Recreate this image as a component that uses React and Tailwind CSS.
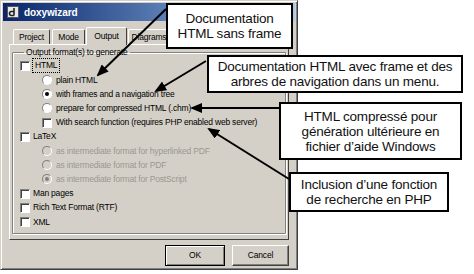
import React from "react";

function CheckBox({ disabled }) {
  return (
    <span
      className={`inline-block w-[10px] h-[10px] shrink-0 border border-t-[#808080] border-l-[#808080] border-r-white border-b-white shadow-[inset_1px_1px_0_#404040] ${
        disabled ? "bg-[#d4d0c8]" : "bg-white"
      }`}
    />
  );
}

function Radio({ checked, disabled }) {
  return (
    <span
      className={`relative inline-block w-[10px] h-[10px] shrink-0 rounded-full border border-t-[#808080] border-l-[#808080] border-r-white border-b-white ${
        disabled ? "bg-[#d4d0c8]" : "bg-white"
      }`}
    >
      {checked && (
        <span
          className={`absolute left-[2px] top-[2px] w-[4px] h-[4px] rounded-full ${
            disabled ? "bg-[#808080]" : "bg-black"
          }`}
        />
      )}
    </span>
  );
}

function Row({ indent, children }) {
  return (
    <div className={`flex items-center h-[14.2px] ${indent}`}>{children}</div>
  );
}

function Callout({ className, lines }) {
  return (
    <div
      className={`absolute bg-white border-2 border-black flex flex-col items-center justify-center text-[13.5px] leading-[15px] text-[#111] ${className}`}
    >
      {lines.map((l) => (
        <span key={l}>{l}</span>
      ))}
    </div>
  );
}

function Tab({ label, active, width }) {
  return (
    <div
      className={`flex items-center justify-center border-t border-l border-t-white border-l-white border-r border-r-[#404040] rounded-t-[2px] bg-[#d4d0c8] ${width} ${
        active ? "h-[18px] -mb-[1px] z-10 relative" : "h-[15px]"
      }`}
    >
      {label}
    </div>
  );
}

export default function App() {
  return (
    <div className="relative w-[474px] h-[274px] bg-white overflow-hidden font-['Liberation_Sans',Arial,sans-serif] text-[8.5px] tracking-[-0.2px] text-black">
      {/* dialog window */}
      <div className="w-[298px] h-[270px] bg-[#d4d0c8] border border-t-[#d4d0c8] border-l-[#d4d0c8] border-r-[#404040] border-b-[#404040] shadow-[inset_1px_1px_0_white,inset_-1px_-1px_0_#808080] flex flex-col p-[2px]">
        <div className="h-[18px] flex items-center gap-[5px] px-[4px] bg-linear-to-r from-[#0a246a] to-[#a6caf0]">
          <svg width="12" height="12" viewBox="0 0 12 12">
            <rect x="0.5" y="0.5" width="11" height="11" fill="#e8e8e8" stroke="#555" />
            <path d="M7 2v7.5M7 9.5H4.5a2 2 0 0 1 0-4H7" fill="none" stroke="#222" strokeWidth="1.6" />
          </svg>
          <span className="text-white font-bold text-[10px] tracking-[-0.1px]">doxywizard</span>
        </div>

        <div className="flex items-end h-[21px] pl-[10px] mt-[2px] gap-[2px]">
          <Tab label="Project" width="w-[37px]" />
          <Tab label="Mode" width="w-[33px]" />
          <Tab label="Output" width="w-[41px] -mx-[1px]" active />
          <Tab label="Diagrams" width="w-[42px]" />
        </div>

        <div className="mx-[6px] h-[196px] border border-t-white border-l-white border-r-[#404040] border-b-[#404040] px-[2px] pt-[1px]">
          <fieldset className="h-[188px] border border-[#808080] shadow-[1px_1px_0_white,inset_1px_1px_0_white] px-[7px] rounded-[1px]">
            <legend className="ml-[4px] px-[2px]">Output format(s) to generate</legend>
            <div className="flex flex-col">
              <Row indent="">
                <CheckBox />
                <span className="ml-[2px] px-[2px] border border-dotted border-black">HTML</span>
              </Row>
              <Row indent="pl-[22px]">
                <Radio />
                <span className="ml-[4px]">plain HTML</span>
              </Row>
              <Row indent="pl-[22px]">
                <Radio checked />
                <span className="ml-[4px]">with frames and a navigation tree</span>
              </Row>
              <Row indent="pl-[22px]">
                <Radio />
                <span className="ml-[4px]">prepare for compressed HTML (.chm)</span>
              </Row>
              <Row indent="pl-[22px]">
                <CheckBox />
                <span className="ml-[4px]">With search function (requires PHP enabled web server)</span>
              </Row>
              <Row indent="">
                <CheckBox />
                <span className="ml-[3px]">LaTeX</span>
              </Row>
              <Row indent="pl-[22px]">
                <Radio disabled />
                <span className="ml-[4px] text-[#9a9890]">as intermediate format for hyperlinked PDF</span>
              </Row>
              <Row indent="pl-[22px]">
                <Radio disabled />
                <span className="ml-[4px] text-[#9a9890]">as intermediate format for PDF</span>
              </Row>
              <Row indent="pl-[22px]">
                <Radio checked disabled />
                <span className="ml-[4px] text-[#9a9890]">as intermediate format for PostScript</span>
              </Row>
              <Row indent="">
                <CheckBox />
                <span className="ml-[3px]">Man pages</span>
              </Row>
              <Row indent="">
                <CheckBox />
                <span className="ml-[3px]">Rich Text Format (RTF)</span>
              </Row>
              <Row indent="">
                <CheckBox />
                <span className="ml-[3px]">XML</span>
              </Row>
            </div>
          </fieldset>
        </div>

        <div className="flex justify-end gap-[7px] pr-[6px] mt-[5px]">
          <button className="w-[60px] h-[21px] border border-black shadow-[inset_1px_1px_0_white,inset_-1px_-1px_0_#808080] bg-[#d4d0c8]">
            OK
          </button>
          <button className="w-[57px] h-[21px] border border-t-white border-l-white border-r-[#404040] border-b-[#404040] shadow-[inset_-1px_-1px_0_#808080] bg-[#d4d0c8]">
            Cancel
          </button>
        </div>
      </div>

      {/* annotation callouts */}
      <Callout className="left-[166px] top-[3px] w-[127px] h-[46px]" lines={["Documentation", "HTML sans frame"]} />
      <Callout
        className="left-[207px] top-[55px] w-[256px] h-[38px]"
        lines={["Documentation HTML avec frame et des", "arbres de navigation dans un menu."]}
      />
      <Callout
        className="left-[279px] top-[102px] w-[183px] h-[58px]"
        lines={["HTML compressé pour", "génération ultérieure en", "fichier d’aide Windows"]}
      />
      <Callout
        className="left-[289px] top-[172px] w-[160px] h-[40px]"
        lines={["Inclusion d’une fonction", "de recherche en PHP"]}
      />

      <svg className="absolute left-0 top-0" width="474" height="274" viewBox="0 0 474 274">
        <defs>
          <marker id="ah" markerWidth="12" markerHeight="10" refX="10" refY="5" orient="auto" markerUnits="userSpaceOnUse">
            <path d="M0 0L12 5L0 10z" fill="#000" />
          </marker>
        </defs>
        <g stroke="#000" strokeWidth="2" markerEnd="url(#ah)">
          <line x1="166" y1="9" x2="98" y2="75" />
          <line x1="206" y1="61" x2="156" y2="91" />
          <line x1="279" y1="108" x2="192" y2="108" />
          <line x1="289" y1="179" x2="209" y2="129" />
        </g>
      </svg>
    </div>
  );
}
